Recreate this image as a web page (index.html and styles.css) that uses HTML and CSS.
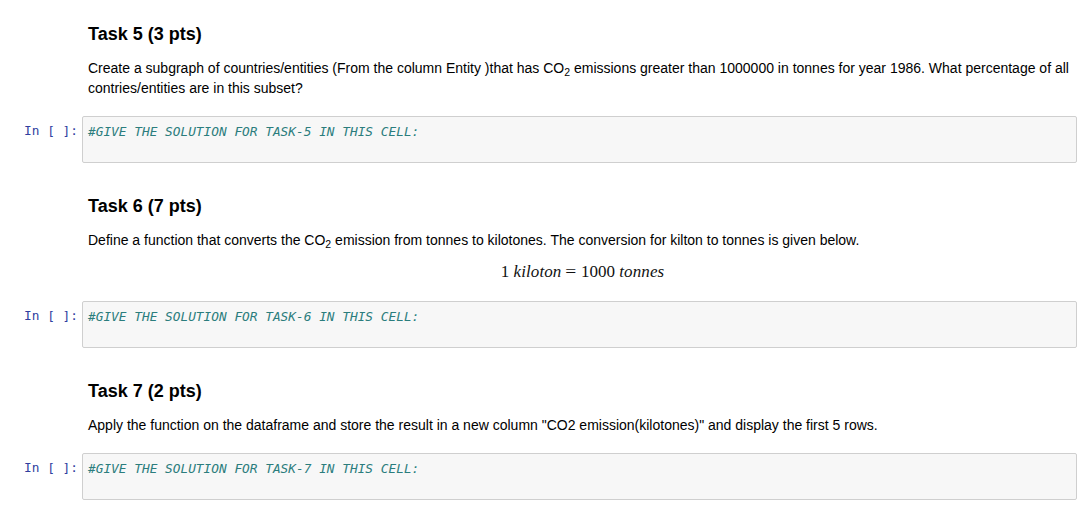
FILE: index.html
```html
<!DOCTYPE html>
<html>
<head>
<meta charset="utf-8">
<link rel="stylesheet" href="styles.css">
</head>
<body>
<div class="notebook">
  <div class="md first">
    <h4 class="title">Task 5 (3 pts)</h4>
    <p class="text">Create a subgraph of countries/entities (From the column Entity )that has CO<sub>2</sub> emissions greater than 1000000 in tonnes for year 1986. What percentage of all contries/entities are in this subset?</p>
  </div>
  <div class="code-cell">
    <div class="prompt">In&nbsp;[&nbsp;]:</div>
    <div class="input"><span class="comment">#GIVE THE SOLUTION FOR TASK-5 IN THIS CELL:</span></div>
  </div>

  <div class="md">
    <h4 class="title">Task 6 (7 pts)</h4>
    <p class="text">Define a function that converts the CO<sub>2</sub> emission from tonnes to kilotones. The conversion for kilton to tonnes is given below.</p>
    <div class="math">1 <i>kiloton</i><span class="eq">=</span>1000 <i>tonnes</i></div>
  </div>
  <div class="code-cell">
    <div class="prompt">In&nbsp;[&nbsp;]:</div>
    <div class="input"><span class="comment">#GIVE THE SOLUTION FOR TASK-6 IN THIS CELL:</span></div>
  </div>

  <div class="md">
    <h4 class="title">Task 7 (2 pts)</h4>
    <p class="text">Apply the function on the dataframe and store the result in a new column "CO2 emission(kilotones)" and display the first 5 rows.</p>
  </div>
  <div class="code-cell">
    <div class="prompt">In&nbsp;[&nbsp;]:</div>
    <div class="input"><span class="comment">#GIVE THE SOLUTION FOR TASK-7 IN THIS CELL:</span></div>
  </div>
</div>
</body>
</html>
```
FILE: styles.css
```css
html, body {
  margin: 0;
  padding: 0;
  background: #ffffff;
}
.notebook {
  width: 1090px;
  font-family: "Liberation Sans", Arial, sans-serif;
  color: #000;
}
.md {
  padding: 32px 13px 0 88px;
}
.md.first {
  padding-top: 23px;
}
.title {
  margin: 0;
  font-size: 18px;
  line-height: 22px;
  font-weight: bold;
}
.text {
  margin: 13px 0 0 0;
  font-size: 14px;
  line-height: 20px;
}
.text sub {
  font-size: 10.5px;
  line-height: 1;
  vertical-align: baseline;
  position: relative;
  top: 3px;
}
.math {
  margin-top: 11px;
  text-align: center;
  font-family: "Liberation Serif", "Times New Roman", serif;
  font-size: 17px;
  line-height: 22px;
  color: #111;
}
.math i {
  letter-spacing: 0.1px;
}
.math .eq {
  display: inline-block;
  padding: 0 5px;
  transform: scaleX(1.15);
}
.code-cell {
  display: flex;
  margin-top: 18px;
  margin-right: 13px;
}
.prompt {
  width: 82px;
  box-sizing: border-box;
  padding: 7px 4px 0 0;
  text-align: right;
  font-family: "DejaVu Sans Mono", monospace;
  font-size: 12.8px;
  line-height: 16px;
  color: #303f9f;
}
.input {
  flex: 1;
  height: 47px;
  box-sizing: border-box;
  border: 1px solid #cfcfcf;
  border-radius: 2px;
  background: #f7f7f7;
  padding: 7px 5px;
  font-family: "DejaVu Sans Mono", monospace;
  font-size: 12.8px;
  line-height: 16px;
}
.comment {
  color: #2b7d7d;
  font-style: italic;
}
```
